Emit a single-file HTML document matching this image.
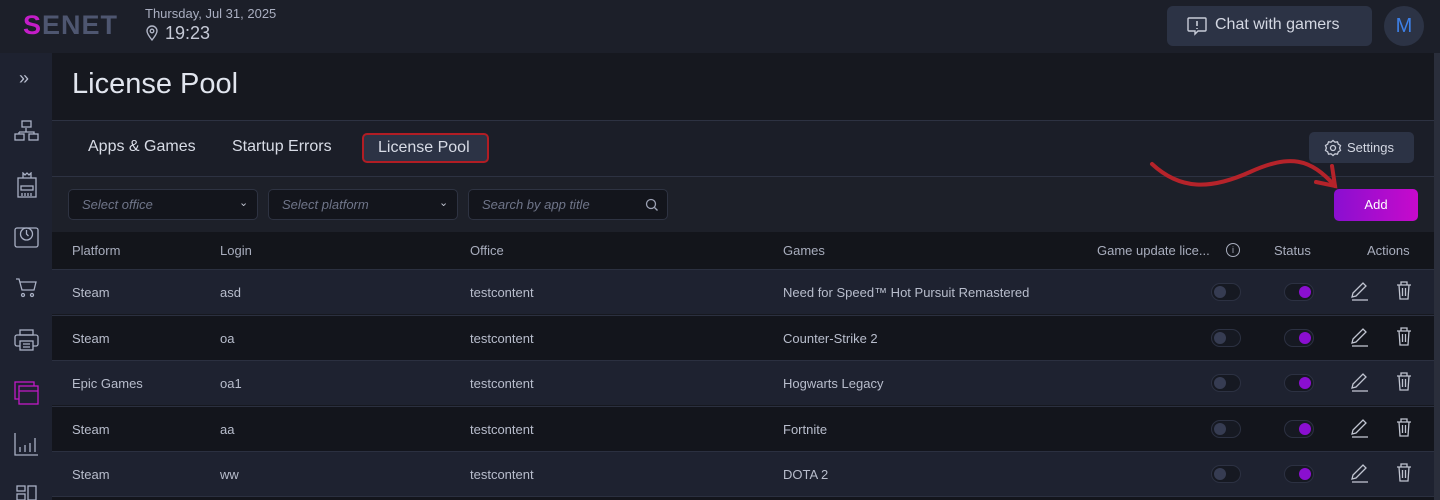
<!DOCTYPE html>
<html><head><style>
*{box-sizing:border-box;margin:0;padding:0}
body{width:1440px;height:500px;overflow:hidden;background:#171920;font-family:"Liberation Sans",sans-serif;color:#c9cedb;position:relative}
.hdr{position:absolute;left:0;top:0;width:1440px;height:53px;background:#1c1f29}
.side{position:absolute;left:0;top:53px;width:52px;height:447px;background:#1e2230}
.main{position:absolute;left:52px;top:53px;width:1382px;height:447px;background:#16181f}
.scroll{position:absolute;left:1434px;top:53px;width:6px;height:447px;background:#2a2e3b}
.abs{position:absolute}
.row{position:absolute;left:52px;width:1382px;height:45px;border-top:1px solid #2b3040;font-size:13px;color:#b8bdcc}
.row span{position:absolute;top:15px}
.tog{position:absolute;width:30px;height:18px;border-radius:9px;background:#161922;border:1px solid #2c3142}
.tog i{position:absolute;top:2px;width:12px;height:12px;border-radius:50%}
.sel{position:absolute;top:189px;height:31px;border:1px solid #2e3342;border-radius:5px;background:#13151c;font-style:italic;font-size:13px;color:#6f7589;padding:7px 13px}
</style></head><body>
<div class="hdr"></div>
<div class="abs" style="left:23px;top:10px;font-size:27px;font-weight:bold;letter-spacing:1px;color:#4e5670"><span style="color:#c41dc8">S</span>ENET</div>
<div class="abs" style="left:145px;top:6px;font-size:13px;color:#a9aec0">Thursday, Jul 31, 2025</div>
<svg class="abs" style="left:145px;top:25px" width="14" height="16" viewBox="0 0 14 16"><path d="M7 15C3 10 2 8 2 6a5 5 0 0110 0c0 2-1 4-5 9z" fill="none" stroke="#b0b5c6" stroke-width="1.4"/><circle cx="7" cy="6" r="1.8" fill="none" stroke="#b0b5c6" stroke-width="1.3"/></svg>
<div class="abs" style="left:165px;top:23px;font-size:18px;color:#c6cad7">19:23</div>
<div class="abs" style="left:1167px;top:6px;width:205px;height:40px;background:#2c3345;border-radius:6px;font-size:16px;color:#d3d7e2;padding:10px 0 0 48px">Chat with gamers</div>
<svg class="abs" style="left:1186px;top:16px" width="22" height="20" viewBox="0 0 22 20"><path d="M3 2h16a1 1 0 011 1v11a1 1 0 01-1 1h-7l-3 3v-3H3a1 1 0 01-1-1V3a1 1 0 011-1z" fill="none" stroke="#c8ccd8" stroke-width="1.4"/><path d="M11 5v5M11 12v1" stroke="#c8ccd8" stroke-width="1.6"/></svg>
<div class="abs" style="left:1384px;top:6px;width:40px;height:40px;border-radius:50%;background:#2c3345;color:#3d7fe6;font-size:20px;text-align:center;line-height:40px">M</div>
<div class="side"></div>
<div class="main"></div>
<div class="scroll"></div>
<div class="abs" style="left:19px;top:68px;font-size:18px;color:#b9bfd0">»</div>
<svg class="abs" style="left:14px;top:120px" width="25" height="25" viewBox="0 0 25 25" fill="none" stroke="#a9b0c4" stroke-width="1.3"><rect x="8" y="1" width="9" height="6"/><rect x="1" y="14" width="9" height="6"/><rect x="15" y="14" width="9" height="6"/><path d="M12 8v4M5 12h15v2M5 12v2"/></svg>
<svg class="abs" style="left:16px;top:172px" width="22" height="26" viewBox="0 0 22 26" fill="none" stroke="#a9b0c4" stroke-width="1.3"><rect x="2" y="6" width="18" height="19"/><rect x="5" y="14" width="12" height="4"/><path d="M7 6V1l2 2 2-2 2 2 2-2v5M6 21v3M9 21v3M12 21v3M15 21v3"/></svg>
<svg class="abs" style="left:14px;top:224px" width="25" height="25" viewBox="0 0 25 25" fill="none" stroke="#a9b0c4" stroke-width="1.3"><rect x="1" y="4" width="23" height="19" rx="2"/><circle cx="12.5" cy="10" r="6"/><path d="M12.5 6v4l2 2"/></svg>
<svg class="abs" style="left:15px;top:277px" width="22" height="22" viewBox="0 0 22 22" fill="none" stroke="#a9b0c4" stroke-width="1.3"><path d="M1 2h3l3 11h12l2-8H5"/><circle cx="8" cy="18" r="1.5"/><circle cx="17" cy="18" r="1.5"/></svg>
<svg class="abs" style="left:14px;top:328px" width="25" height="24" viewBox="0 0 25 24" fill="none" stroke="#a9b0c4" stroke-width="1.3"><rect x="1" y="7" width="23" height="11" rx="2"/><rect x="6" y="2" width="13" height="5"/><rect x="6" y="13" width="13" height="9" fill="#1e2230"/><path d="M9 16h7M9 19h7"/></svg>
<svg class="abs" style="left:14px;top:381px" width="25" height="24" viewBox="0 0 25 24" fill="none" stroke="#c11ac6" stroke-width="1.3"><rect x="1" y="1" width="19" height="17"/><rect x="5" y="5" width="19" height="18" fill="#1e2230"/><path d="M5 10h19"/></svg>
<svg class="abs" style="left:14px;top:432px" width="25" height="24" viewBox="0 0 25 24" fill="none" stroke="#a9b0c4" stroke-width="1.3"><path d="M1 1v22h23M6 20v-5M11 20v-7M16 20v-9M21 20V6"/></svg>
<svg class="abs" style="left:16px;top:485px" width="22" height="15" viewBox="0 0 22 15" fill="none" stroke="#a9b0c4" stroke-width="1.3"><rect x="1" y="1" width="8" height="5"/><rect x="12" y="1" width="8" height="14"/><rect x="1" y="9" width="8" height="6"/></svg>

<div class="abs" style="left:72px;top:68px;font-size:29px;color:#e1e5ee">License Pool</div>
<div class="abs" style="left:52px;top:120px;width:1382px;height:57px;background:#1b1e28;border-top:1px solid #2d3242;border-bottom:1px solid #2d3242"></div>
<div class="abs" style="left:88px;top:138px;font-size:16px;color:#d8dce6">Apps &amp; Games</div>
<div class="abs" style="left:232px;top:138px;font-size:16px;color:#d8dce6">Startup Errors</div>
<div class="abs" style="left:362px;top:133px;width:127px;height:30px;background:#2c3345;border:2px solid #b11d24;border-radius:5px;font-size:16px;color:#d8dce6;padding:4px 0 0 14px">License Pool</div>
<div class="abs" style="left:1309px;top:132px;width:105px;height:31px;background:#2c3345;border-radius:5px;font-size:13px;color:#d3d7e2;padding:8px 0 0 38px">Settings</div>
<svg class="abs" style="left:1324px;top:139px" width="18" height="18" viewBox="0 0 18 18" fill="none" stroke="#c8ccd8" stroke-width="1.3"><circle cx="9" cy="9" r="2.5"/><path d="M9 1.5l2 1.7 2.5-.4.8 2.4 2.2 1.3-.9 2.5.9 2.5-2.2 1.3-.8 2.4-2.5-.4-2 1.7-2-1.7-2.5.4-.8-2.4-2.2-1.3.9-2.5-.9-2.5 2.2-1.3.8-2.4 2.5.4z"/></svg>
<div class="abs" style="left:52px;top:177px;width:1382px;height:55px;background:#1d2029"></div>
<div class="sel" style="left:68px;width:190px">Select office</div>
<div class="sel" style="left:268px;width:190px">Select platform</div>
<div class="sel" style="left:468px;width:200px">Search by app title</div>
<div class="abs" style="left:239px;top:196px;font-size:11px;color:#c0c4d0">⌄</div>
<div class="abs" style="left:439px;top:196px;font-size:11px;color:#c0c4d0">⌄</div>
<svg class="abs" style="left:645px;top:198px" width="14" height="14" viewBox="0 0 14 14" fill="none" stroke="#9ca1b3" stroke-width="1.3"><circle cx="6" cy="6" r="4.5"/><path d="M9.5 9.5l3 3"/></svg>
<div class="abs" style="left:1334px;top:189px;width:84px;height:32px;border-radius:5px;background:linear-gradient(90deg,#8a0fd0,#c70acb);color:#fff;font-size:13px;text-align:center;line-height:32px">Add</div>
<svg class="abs" style="left:1140px;top:150px" width="210" height="50" viewBox="0 0 210 50" fill="none" stroke="#b5232a" stroke-width="4" stroke-linecap="round"><path d="M12 14C40 40 70 40 110 22S170 8 195 36"/><path d="M192 16l3 20-19-4"/></svg>

<div class="abs" style="left:52px;top:232px;width:1382px;height:38px;background:#13151b"></div>
<div class="abs" style="top:243px;left:72px;font-size:13px;color:#a8adbd">Platform</div>
<div class="abs" style="top:243px;left:220px;font-size:13px;color:#a8adbd">Login</div>
<div class="abs" style="top:243px;left:470px;font-size:13px;color:#a8adbd">Office</div>
<div class="abs" style="top:243px;left:783px;font-size:13px;color:#a8adbd">Games</div>
<div class="abs" style="top:243px;left:1097px;font-size:13px;color:#a8adbd">Game update lice...</div>
<div class="abs" style="top:243px;left:1226px;width:14px;height:14px;border:1px solid #a8adbd;border-radius:50%;font-size:9px;text-align:center;line-height:12px;color:#a8adbd">i</div>
<div class="abs" style="top:243px;left:1274px;font-size:13px;color:#a8adbd">Status</div>
<div class="abs" style="top:243px;left:1367px;font-size:13px;color:#a8adbd">Actions</div>

<div class="row" style="top:269px;background:#1e2230"><span style="left:20px">Steam</span><span style="left:168px">asd</span><span style="left:418px">testcontent</span><span style="left:731px">Need for Speed™ Hot Pursuit Remastered</span></div>
<div class="row" style="top:315px;background:#13151c"><span style="left:20px">Steam</span><span style="left:168px">oa</span><span style="left:418px">testcontent</span><span style="left:731px">Counter-Strike 2</span></div>
<div class="row" style="top:360px;background:#1e2230"><span style="left:20px">Epic Games</span><span style="left:168px">oa1</span><span style="left:418px">testcontent</span><span style="left:731px">Hogwarts Legacy</span></div>
<div class="row" style="top:406px;background:#13151c"><span style="left:20px">Steam</span><span style="left:168px">aa</span><span style="left:418px">testcontent</span><span style="left:731px">Fortnite</span></div>
<div class="row" style="top:451px;background:#1e2230"><span style="left:20px">Steam</span><span style="left:168px">ww</span><span style="left:418px">testcontent</span><span style="left:731px">DOTA 2</span></div>
<div class="abs" style="left:52px;top:496px;width:1382px;height:4px;background:#13151c;border-top:1px solid #2b3040"></div>

<div id="ctrls"></div>
<script>
var ys=[292,338,383,429,474],h='';
ys.forEach(function(y){
h+='<div class="tog" style="left:1211px;top:'+(y-9)+'px"><i style="left:2px;background:#363c52"></i></div>';
h+='<div class="tog" style="left:1284px;top:'+(y-9)+'px"><i style="left:14px;background:#8a0fd0"></i></div>';
h+='<svg class="abs" style="left:1350px;top:'+(y-12)+'px" width="20" height="22" viewBox="0 0 20 22" fill="none" stroke="#c0c4d0" stroke-width="1.3"><path d="M2 17l1-4L13 3l3 3L6 16z"/><path d="M2 20h16"/></svg>';
h+='<svg class="abs" style="left:1396px;top:'+(y-11)+'px" width="16" height="19" viewBox="0 0 16 19" fill="none" stroke="#c0c4d0" stroke-width="1.3"><path d="M1 4h14M5 4V1h6v3M3 4l1 14h8l1-14M6.5 7v8M9.5 7v8"/></svg>';
});
document.getElementById('ctrls').innerHTML=h;
</script>
</body></html>
